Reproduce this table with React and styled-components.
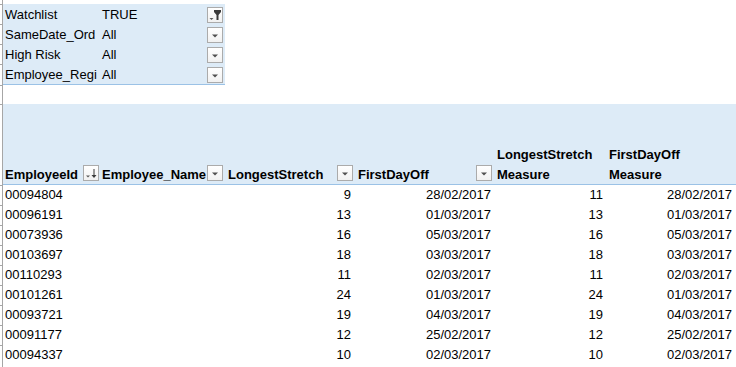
import React from "react";
import styled, { createGlobalStyle } from "styled-components";

const Global = createGlobalStyle`
  html, body { margin: 0; padding: 0; background: #fff; }
  body { font-family: "Liberation Sans", Arial, sans-serif; }
`;

const COLS = "98px 124px 130px 139px 113px 127px 1fr";

const Root = styled.div`
  display: flex;
  width: 736px;
  height: 367px;
  overflow: hidden;
  background: #fff;
  font-family: "Liberation Sans", Arial, sans-serif;
  font-size: 13px;
  color: #000;
`;

const Edge = styled.div`
  width: 3px;
  flex: none;
  box-sizing: border-box;
  border-right: 1px solid #a6a6a6;
  display: flex;
  flex-direction: column;
`;

const Tick = styled.div`
  flex: none;
  height: ${(p) => p.$h}px;
  box-sizing: border-box;
  border-top: ${(p) => (p.$first ? "none" : "1px solid #a6a6a6")};
`;

const Sheet = styled.div`
  flex: 1;
  min-width: 0;
  display: flex;
  flex-direction: column;
`;

const TopGap = styled.div`
  height: 4px;
  flex: none;
`;

const FilterArea = styled.div`
  width: 222px;
  display: grid;
  grid-template-columns: 98px 124px;
  grid-auto-rows: 20px;
  background: #ddebf7;
  border-bottom: 1px solid #9bc2e6;
  flex: none;
`;

const FilterLabel = styled.div`
  padding-left: 2px;
  line-height: 22px;
  white-space: nowrap;
  overflow: hidden;
`;

const FilterValue = styled.div`
  display: flex;
  justify-content: space-between;
  padding: 0 2px 0 1px;
  line-height: 22px;
  white-space: nowrap;
`;

const BlankRow = styled.div`
  height: 19px;
  flex: none;
`;

const HeaderRow = styled.div`
  display: grid;
  grid-template-columns: ${COLS};
  height: 80px;
  flex: none;
  background: #ddebf7;
  border-bottom: 1px solid #9bc2e6;
  font-weight: bold;
`;

const HeaderCell = styled.div`
  display: flex;
  align-items: flex-end;
  justify-content: space-between;
  padding: 0 2px 0 ${(p) => p.$pl ?? 3}px;
  line-height: 20px;
  white-space: nowrap;
  overflow: hidden;
`;

const HeaderText = styled.span`
  margin-bottom: -1px;
`;

const DropButton = styled.span`
  flex: none;
  width: 16px;
  height: 16px;
  box-sizing: border-box;
  border: 1px solid #ababab;
  background: linear-gradient(#ffffff, #f1f1f1);
  align-self: flex-end;
  margin-bottom: ${(p) => p.$mb ?? 1}px;
  display: flex;
  align-items: center;
  justify-content: center;
`;

const DataRow = styled.div`
  display: grid;
  grid-template-columns: ${COLS};
  height: 20px;
  flex: none;
  line-height: 20px;
`;

const DataCell = styled.div`
  text-align: ${(p) => (p.$right ? "right" : "left")};
  padding: 0 ${(p) => p.$pr ?? 3}px 0 2px;
  white-space: nowrap;
  overflow: hidden;
`;

const Caret = () => (
  <svg width="14" height="14" viewBox="0 0 14 14">
    <polygon points="4,6.5 10,6.5 7,9.5" fill="#505050" />
  </svg>
);

const FunnelIcon = () => (
  <svg width="14" height="14" viewBox="0 0 14 14">
    <polygon points="6,2 13,2 13,4 10.5,7 10.5,12 8.5,12 8.5,7 6,4" fill="#3a3a3a" />
    <polygon points="1.5,10 5.5,10 3.5,12" fill="#595959" />
  </svg>
);

const SortIcon = () => (
  <svg width="14" height="14" viewBox="0 0 14 14">
    <polygon points="2,9.5 6,9.5 4,11.5" fill="#595959" />
    <rect x="9.5" y="3" width="1" height="7" fill="#3a3a3a" />
    <polygon points="7.5,9 12.5,9 10,12" fill="#3a3a3a" />
  </svg>
);

const filters = [
  { label: "Watchlist", value: "TRUE", active: true },
  { label: "SameDate_Ord", value: "All" },
  { label: "High Risk", value: "All" },
  { label: "Employee_Regi", value: "All" },
];

const rows = [
  ["00094804", 9, "28/02/2017", 11, "28/02/2017"],
  ["00096191", 13, "01/03/2017", 13, "01/03/2017"],
  ["00073936", 16, "05/03/2017", 16, "05/03/2017"],
  ["00103697", 18, "03/03/2017", 18, "03/03/2017"],
  ["00110293", 11, "02/03/2017", 11, "02/03/2017"],
  ["00101261", 24, "01/03/2017", 24, "01/03/2017"],
  ["00093721", 19, "04/03/2017", 19, "04/03/2017"],
  ["00091177", 12, "25/02/2017", 12, "25/02/2017"],
  ["00094337", 10, "02/03/2017", 10, "02/03/2017"],
];

const tickHeights = [4, 20, 20, 20, 21, 19, 81, 20, 20, 20, 20, 20, 20, 20, 20, 20];

export default function App() {
  return (
    <>
      <Global />
      <Root>
        <Edge>
          {tickHeights.map((h, i) => (
            <Tick key={i} $h={h} $first={i === 0} />
          ))}
        </Edge>
        <Sheet>
          <TopGap />
          <FilterArea>
            {filters.map((f) => (
              <React.Fragment key={f.label}>
                <FilterLabel>{f.label}</FilterLabel>
                <FilterValue>
                  <span>{f.value}</span>
                  <DropButton>{f.active ? <FunnelIcon /> : <Caret />}</DropButton>
                </FilterValue>
              </React.Fragment>
            ))}
          </FilterArea>
          <BlankRow />
          <HeaderRow>
            <HeaderCell $pl={2}>
              <HeaderText>EmployeeId</HeaderText>
              <DropButton $mb={3}>
                <SortIcon />
              </DropButton>
            </HeaderCell>
            <HeaderCell $pl={1}>
              <HeaderText>Employee_Name</HeaderText>
              <DropButton $mb={3}>
                <Caret />
              </DropButton>
            </HeaderCell>
            <HeaderCell>
              <HeaderText>LongestStretch</HeaderText>
              <DropButton $mb={3}>
                <Caret />
              </DropButton>
            </HeaderCell>
            <HeaderCell>
              <HeaderText>FirstDayOff</HeaderText>
              <DropButton $mb={3}>
                <Caret />
              </DropButton>
            </HeaderCell>
            <HeaderCell>
              <HeaderText>
                LongestStretch
                <br />
                Measure
              </HeaderText>
            </HeaderCell>
            <HeaderCell $pl={2}>
              <HeaderText>
                FirstDayOff
                <br />
                Measure
              </HeaderText>
            </HeaderCell>
            <HeaderCell />
          </HeaderRow>
          {rows.map((r) => (
            <DataRow key={r[0]}>
              <DataCell>{r[0]}</DataCell>
              <DataCell />
              <DataCell $right $pr={4}>{r[1]}</DataCell>
              <DataCell $right>{r[2]}</DataCell>
              <DataCell $right $pr={4}>{r[3]}</DataCell>
              <DataCell $right $pr={2}>{r[4]}</DataCell>
              <DataCell />
            </DataRow>
          ))}
        </Sheet>
      </Root>
    </>
  );
}
